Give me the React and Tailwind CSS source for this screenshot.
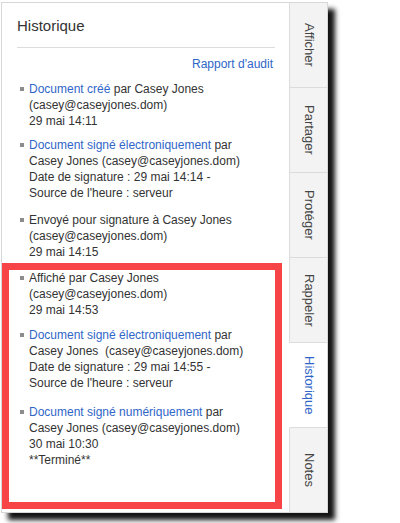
import React from "react";

const items = [
  {
    mt: "mt-0",
    lines: [
      <><span className="text-[#2f66c8]">Document créé</span> par Casey Jones</>,
      "(casey@caseyjones.dom)",
      "29 mai 14:11",
    ],
  },
  {
    mt: "mt-[8px]",
    lines: [
      <><span className="text-[#2f66c8]">Document signé électroniquement</span> par</>,
      "Casey Jones (casey@caseyjones.dom)",
      "Date de signature : 29 mai 14:14 -",
      "Source de l'heure : serveur",
    ],
  },
  {
    mt: "mt-[11px]",
    lines: [
      "Envoyé pour signature à Casey Jones",
      "(casey@caseyjones.dom)",
      "29 mai 14:15",
    ],
  },
  {
    mt: "mt-[10px]",
    lines: ["Affiché par Casey Jones", "(casey@caseyjones.dom)", "29 mai 14:53"],
  },
  {
    mt: "mt-[9px]",
    lines: [
      <><span className="text-[#2f66c8]">Document signé électroniquement</span> par</>,
      "Casey Jones\u00a0 (casey@caseyjones.dom)",
      "Date de signature : 29 mai 14:55 -",
      "Source de l'heure : serveur",
    ],
  },
  {
    mt: "mt-[13px]",
    lines: [
      <><span className="text-[#2f66c8]">Document signé numériquement</span> par</>,
      "Casey Jones (casey@caseyjones.dom)",
      "30 mai 10:30",
      "**Terminé**",
    ],
  },
];

const tabs = ["Afficher", "Partager", "Protéger", "Rappeler", "Historique", "Notes"];

export default function App() {
  return (
    <div
      className="min-h-[523px] bg-white pt-[2px] pl-[1px]"
      style={{ fontFamily: '"Liberation Sans", Arial, sans-serif' }}
    >
      <div className="relative flex w-[327px] h-[511px] border border-[#d8d8d8] bg-white shadow-[7px_7px_5px_rgba(0,0,0,0.92)]">
        {/* Left: history panel */}
        <div className="flex-1 flex flex-col">
          <div className="mx-[15px] mr-[14px] pt-[13px] pb-[11px] border-b border-[#dcdcdc]">
            <p className="text-[15px] leading-[20px] text-[#333]">Historique</p>
          </div>
          <p className="mt-[8px] pr-[16px] text-right text-[12px] leading-[16px] text-[#2f66c8]">
            Rapport d'audit
          </p>

          <ul className="mt-[9px] pl-[18px] text-[12px] leading-[16px] text-[#333]">
            {items.map((item, i) => (
              <li key={i} className={`flex gap-[5px] ${item.mt}`}>
                <span className="mt-[6px] w-[4px] h-[4px] shrink-0 bg-[#8c8c8c]" />
                <div>
                  {item.lines.map((line, j) => (
                    <div key={j} className="whitespace-nowrap">
                      {line}
                    </div>
                  ))}
                </div>
              </li>
            ))}
          </ul>
        </div>

        {/* Right: tabs */}
        <div className="w-[38px] flex flex-col">
          {tabs.map((t, i) => {
            const active = t === "Historique";
            return (
              <div
                key={t}
                className={`flex-1 flex items-center justify-center ${
                  i < tabs.length - 1 ? "border-b border-b-[#dcdcdc]" : ""
                } ${
                  active
                    ? "bg-white border-l border-l-white"
                    : "bg-[#f3f3f3] border-l border-l-[#dcdcdc]"
                }`}
              >
                <span
                  className={`[writing-mode:vertical-rl] text-[13px] leading-[16px] ${
                    active ? "text-[#2f66c8]" : "text-[#444]"
                  }`}
                >
                  {t}
                </span>
              </div>
            );
          })}
        </div>

        {/* Highlight annotation */}
        <div className="absolute left-0 top-[260px] w-[280px] h-[246px] border-[7px] border-[#f64447] pointer-events-none" />
      </div>
    </div>
  );
}
